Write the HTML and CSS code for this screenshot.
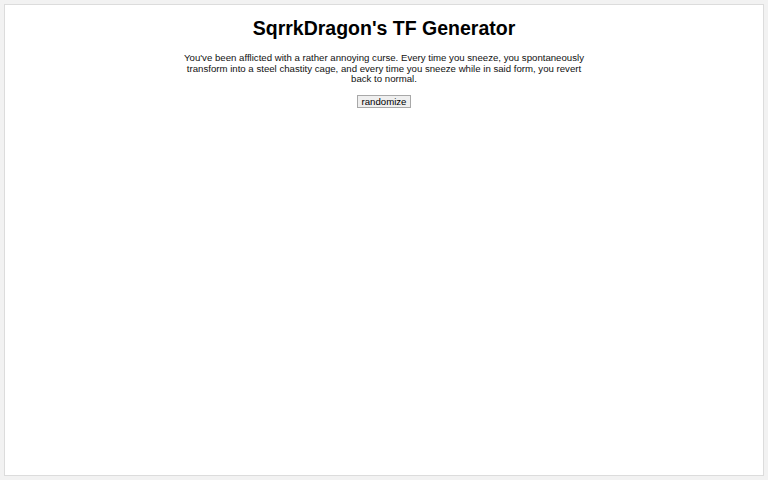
FILE: index.html
```html
<!DOCTYPE html>
<html>
<head>
<meta charset="utf-8">
<link rel="stylesheet" href="styles.css">
</head>
<body>
<main class="panel">
  <h1 class="title">SqrrkDragon's TF Generator</h1>
  <p class="desc">You've been afflicted with a rather annoying curse. Every time you sneeze, you spontaneously transform into a steel chastity cage, and every time you sneeze while in said form, you revert back to normal.</p>
  <button class="btn">randomize</button>
</main>
</body>
</html>
```
FILE: styles.css
```css
html, body {
  margin: 0;
  height: 100%;
}
body {
  background: #f2f2f2;
  padding: 4px;
  box-sizing: border-box;
  font-family: "Liberation Sans", Arial, sans-serif;
}
.panel {
  box-sizing: border-box;
  height: 472px;
  width: 760px;
  background: #fff;
  border: 1px solid #dcdcdc;
  display: flex;
  flex-direction: column;
  align-items: center;
  padding-top: 12px;
}
.title {
  margin: 0;
  font-size: 19.5px;
  font-weight: bold;
  color: #000;
  line-height: 23px;
}
.desc {
  margin: 13px 0 0;
  width: 402px;
  font-size: 9.65px;
  line-height: 10.5px;
  text-align: center;
  color: #111;
}
.btn {
  margin-top: 10px;
  font-family: "Liberation Sans", Arial, sans-serif;
  font-size: 9.65px;
  line-height: 11px;
  padding: 0 4px;
  background: #efefef;
  border: 1px solid #a8a8a8;
  border-radius: 0;
  color: #000;
}
```
